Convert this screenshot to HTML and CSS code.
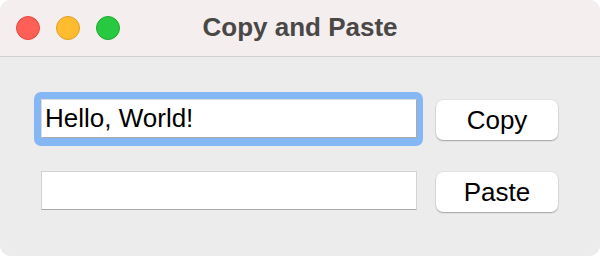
FILE: index.html
```html
<!DOCTYPE html>
<html>
<head>
<meta charset="utf-8">
<link rel="stylesheet" href="styles.css">
</head>
<body>
<div class="window">
  <div class="titlebar">
    <div class="lights">
      <span class="light red"></span>
      <span class="light yellow"></span>
      <span class="light green"></span>
    </div>
    <div class="title">Copy and Paste</div>
  </div>
  <div class="content">
    <div class="row">
      <div class="focus"><div class="field">Hello, World!</div></div>
      <div class="button">Copy</div>
    </div>
    <div class="row">
      <div class="field"></div>
      <div class="button">Paste</div>
    </div>
  </div>
</div>
</body>
</html>
```
FILE: styles.css
```css
html, body {
  margin: 0;
  padding: 0;
  background: #ffffff;
}
body {
  width: 600px;
  height: 256px;
  font-family: "Liberation Sans", Arial, sans-serif;
}
.window {
  width: 600px;
  height: 256px;
  border-radius: 11px;
  overflow: hidden;
  background: #ececec;
  display: flex;
  flex-direction: column;
}
.titlebar {
  position: relative;
  height: 56px;
  background: #f4eeee;
  border-bottom: 1px solid #d2cfcf;
  display: flex;
  align-items: center;
  justify-content: center;
}
.lights {
  position: absolute;
  left: 16px;
  top: 16px;
  display: flex;
  gap: 16px;
}
.light {
  width: 24px;
  height: 24px;
  border-radius: 50%;
  box-sizing: border-box;
}
.red { background: #fe5f57; border: 1px solid #e5493f; }
.yellow { background: #febc2e; border: 1px solid #dea025; }
.green { background: #28c840; border: 1px solid #1faa31; }
.title {
  font-size: 26px;
  font-weight: bold;
  color: #4a4747;
  margin-top: -1px;
}
.content {
  padding: 43px 0 0 41px;
  display: flex;
  flex-direction: column;
  gap: 31px;
}
.row {
  display: flex;
  align-items: flex-start;
  height: 40px;
  gap: 19px;
}
.row + .row .button {
  margin-top: 1px;
}
.focus {
  margin: -8px -6px -8px -7px;
  padding: 7px 6px 8px 7px;
  background: #85b7f4;
  border-radius: 7px;
  display: flex;
}
.field {
  width: 376px;
  height: 39px;
  box-sizing: border-box;
  background: #ffffff;
  border: 1px solid #d3d3d3;
  border-bottom-color: #aaaaaa;
  font-size: 26px;
  color: #000;
  padding-left: 3px;
  line-height: 37px;
}
.focus .field {
  border-color: #dcdcdc #aaaaaa #aaaaaa #dcdcdc;
}
.button {
  width: 122px;
  height: 40px;
  box-sizing: border-box;
  background: #ffffff;
  border-radius: 7px;
  box-shadow: 0 1px 1.5px rgba(0,0,0,0.28), 0 0 0 0.5px rgba(0,0,0,0.08);
  font-size: 26px;
  color: #000;
  display: flex;
  align-items: center;
  justify-content: center;
}
```
